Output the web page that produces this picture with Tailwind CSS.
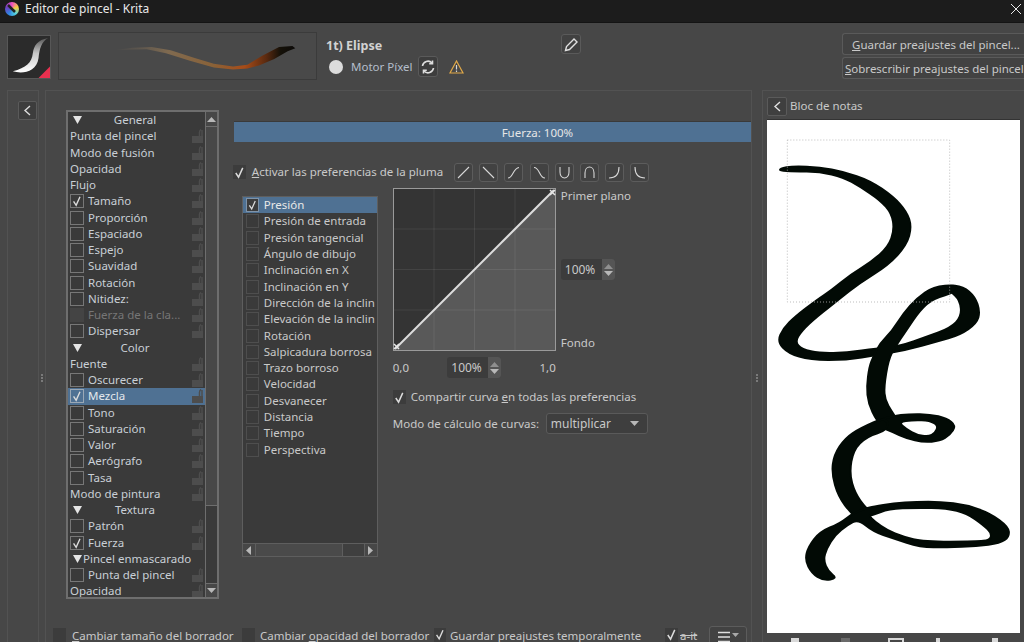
<!DOCTYPE html>
<html lang="es">
<head>
<meta charset="utf-8">
<title>Editor de pincel - Krita</title>
<script src="https://cdn.jsdelivr.net/npm/@tailwindcss/browser@4"></script>
</head>
<body class="m-0">
<svg class="hidden" width="0" height="0">
  <symbol id="lock" viewBox="0 0 11 14"><path d="M0 7h11v7H0z" fill="#4d4d4d"/><path d="M7.5 7V3.5Q7.5 1.5 9 0.5M10 7V1" stroke="#4d4d4d" stroke-width="1.5" fill="none"/></symbol>
  <symbol id="chk" viewBox="0 0 14 14"><path d="M3 7.5L6 12L10.5 2" stroke="#dcdcdc" stroke-width="1.6" fill="none"/></symbol>
  <symbol id="tri" viewBox="0 0 9 8"><path d="M0 0H9L4.5 8Z" fill="#e4e4e4"/></symbol>
</svg>
<div class="w-[1024px] h-[642px] overflow-hidden bg-[#474747] flex flex-col font-['Noto_Sans',sans-serif] text-[11.5px] leading-[16px] text-[#c9c9c9]">

  <!-- title bar -->
  <div class="h-[23px] shrink-0 bg-[#1c1c1c] border-b border-[#141414] flex items-center pl-[5px] pb-[4px] text-[#e8e8e8]">
    <span class="relative w-[14px] h-[14px] rounded-full bg-[conic-gradient(#f050c0,#f8d040,#50d0e0,#3080e0,#7040c0,#f050c0)]">
      <svg class="absolute inset-0" viewBox="0 0 14 14"><path d="M3 3L10 10" stroke="#222" stroke-width="2.5"/></svg>
    </span>
    <span class="ml-[6px] text-[12px]">Editor de pincel - Krita</span>
    <svg class="ml-auto mr-[2px]" width="12" height="12" viewBox="0 0 12 12"><path d="M1 1L11 11M11 1L1 11" stroke="#e8e8e8" stroke-width="1"/></svg>
  </div>

  <!-- header -->
  <div class="h-[67px] shrink-0 flex pl-[7px]">
    <div class="relative mt-[12px] w-[44px] h-[44px] bg-[#2b2b2b] border border-[#575757] overflow-hidden">
      <svg width="42" height="42" viewBox="0 0 44 44">
        <defs><linearGradient id="sg" x1="0" y1="0" x2="0" y2="1"><stop offset="0" stop-color="#555555"/><stop offset="0.45" stop-color="#c8c8c8"/><stop offset="1" stop-color="#ffffff"/></linearGradient></defs>
        <path d="M42 2C31 4 27 10 26 18C25 28 19 33 5 37C15 40 30 38 32 23C33 13 35 6 42 2Z" fill="url(#sg)"/>
        <path d="M32 44L44 44L44 32Z" fill="#e8304f"/>
      </svg>
    </div>
    <div class="mt-[9px] ml-[7px] w-[259px] h-[48px] bg-[#494949] border border-[#3b3b3b]">
      <svg width="257" height="46" viewBox="58 32 259 48">
        <defs><linearGradient id="bg" x1="110" y1="0" x2="300" y2="0" gradientUnits="userSpaceOnUse"><stop offset="0" stop-color="#6a6055" stop-opacity="0"/><stop offset="0.3" stop-color="#7f6a50"/><stop offset="0.55" stop-color="#8a6238"/><stop offset="0.72" stop-color="#a84c18"/><stop offset="0.84" stop-color="#5a2a10"/><stop offset="0.92" stop-color="#141008"/><stop offset="1" stop-color="#0c0a08"/></linearGradient></defs>
        <path d="M110 50L130 47.5L150 46.5L170 50L195 58L215 64L235 67L250 65L265 56L283 46.5L297 45.5L300 48L292 51L278 59L262 66L250 69L235 70L215 68L190 61L165 53L145 49L125 49.5Z" fill="url(#bg)"/>
      </svg>
    </div>
    <div class="ml-[9px] w-[235px] flex flex-col">
      <div class="mt-[15px] font-bold text-[#d2d2d2] text-[12.5px]">1t) Elipse</div>
      <div class="mt-[2px] flex items-center h-[21px]">
        <span class="ml-[3px] w-[14px] h-[14px] rounded-full bg-[#dcdcdc]"></span>
        <span class="ml-[8px] w-[61px] mt-[1px] text-[#b4becb] whitespace-nowrap">Motor Píxel</span>
        <span class="ml-[6px] w-[20px] h-[21px] rounded-[3px] bg-[#3d3d3d] border border-[#5a5a5a] flex items-center justify-center">
          <svg width="16" height="16" viewBox="0 0 16 16" fill="none" stroke="#dddddd" stroke-width="1.6"><path d="M2.5 7A5.5 5.5 0 0 1 12 4M13.5 9A5.5 5.5 0 0 1 4 12"/><path d="M12.5 1.5V4.8H9.2M3.5 14.5V11.2H6.8"/></svg>
        </span>
        <svg class="ml-[11px]" width="15" height="14" viewBox="0 0 15 14" fill="none"><path d="M7.5 1L14 13H1Z" stroke="#e0a848" stroke-width="1.2"/><path d="M7.5 5V9.5M7.5 10.5V12" stroke="#d8d8d8" stroke-width="1.2"/></svg>
      </div>
    </div>
    <div class="mt-[11px] w-[20px] h-[20px] rounded-[3px] border border-[#5a5a5a] bg-[#414141] flex items-center justify-center">
      <svg width="15" height="15" viewBox="0 0 15 15" fill="none" stroke="#e0e0e0" stroke-width="1.4"><path d="M1.5 13.5L2.5 9.5L10 2L13 5L5.5 12.5Z"/></svg>
    </div>
    <div class="ml-auto flex flex-col gap-[2px] mt-[10px] w-[182px]">
      <div class="h-[22px] rounded-l-[3px] border border-r-0 border-[#5a5a5a] bg-[#424242] pl-[9px] leading-[22px] whitespace-nowrap"><span class="underline">G</span>uardar preajustes del pincel...</div>
      <div class="h-[22px] rounded-l-[3px] border border-r-0 border-[#5a5a5a] bg-[#424242] pl-[2px] leading-[22px] whitespace-nowrap"><span class="underline">S</span>obrescribir preajustes del pincel</div>
    </div>
  </div>

  <!-- main -->
  <div class="flex-1 min-h-0 flex pl-[7px]">
    <div class="w-[32px] border border-b-0 border-[#525252] pl-[10px] pt-[10px]">
      <div class="w-[19px] h-[19px] rounded-[2px] border border-[#5a5a5a] bg-[#3d3d3d] flex items-center justify-center">
        <svg width="9" height="11" viewBox="0 0 9 11" fill="none" stroke="#dddddd" stroke-width="1.4"><path d="M7 1L2 5.5L7 10"/></svg>
      </div>
    </div>
    <div class="w-[6px] flex flex-col items-center justify-center gap-[1px] pt-[24px]"><span class="w-[2px] h-[2px] bg-[#7a7a7a]"></span><span class="w-[2px] h-[2px] bg-[#7a7a7a]"></span><span class="w-[2px] h-[2px] bg-[#7a7a7a]"></span></div>

    <!-- centre panel -->
    <div class="w-[707px] border border-b-0 border-[#525252] flex flex-col">
      <div class="h-[535px] flex shrink-0">
        <!-- option list -->
        <div class="mt-[19px] ml-[20px] w-[153px] h-[489px] border-2 border-[#6e6e6e] bg-[#3a3a3a] flex overflow-hidden">
          <div class="w-[137px] overflow-hidden whitespace-nowrap text-[#c9cfd6]">
            <div class="h-[16.25px] flex items-center pl-[5px]"><svg width="9" height="8"><use href="#tri"/></svg><span class="flex-1 text-center pr-[17px]">General</span></div>
            <div class="h-[16.25px] flex items-center pl-[2px]"><span>Punta del pincel</span><svg class="ml-auto mr-[2px]" width="11" height="14"><use href="#lock"/></svg></div>
            <div class="h-[16.25px] flex items-center pl-[2px]"><span>Modo de fusión</span><svg class="ml-auto mr-[2px]" width="11" height="14"><use href="#lock"/></svg></div>
            <div class="h-[16.25px] flex items-center pl-[2px]"><span>Opacidad</span><svg class="ml-auto mr-[2px]" width="11" height="14"><use href="#lock"/></svg></div>
            <div class="h-[16.25px] flex items-center pl-[2px]"><span>Flujo</span><svg class="ml-auto mr-[2px]" width="11" height="14"><use href="#lock"/></svg></div>
            <div class="h-[16.25px] flex items-center pl-[2px]"><span class="w-[14px] h-[14px] border border-[#777] mr-[4px]"><svg width="12" height="12"><use href="#chk"/></svg></span><span>Tamaño</span><svg class="ml-auto mr-[2px]" width="11" height="14"><use href="#lock"/></svg></div>
            <div class="h-[16.25px] flex items-center pl-[2px]"><span class="w-[14px] h-[14px] border border-[#777] mr-[4px]"></span><span>Proporción</span><svg class="ml-auto mr-[2px]" width="11" height="14"><use href="#lock"/></svg></div>
            <div class="h-[16.25px] flex items-center pl-[2px]"><span class="w-[14px] h-[14px] border border-[#777] mr-[4px]"></span><span>Espaciado</span><svg class="ml-auto mr-[2px]" width="11" height="14"><use href="#lock"/></svg></div>
            <div class="h-[16.25px] flex items-center pl-[2px]"><span class="w-[14px] h-[14px] border border-[#777] mr-[4px]"></span><span>Espejo</span><svg class="ml-auto mr-[2px]" width="11" height="14"><use href="#lock"/></svg></div>
            <div class="h-[16.25px] flex items-center pl-[2px]"><span class="w-[14px] h-[14px] border border-[#777] mr-[4px]"></span><span>Suavidad</span><svg class="ml-auto mr-[2px]" width="11" height="14"><use href="#lock"/></svg></div>
            <div class="h-[16.25px] flex items-center pl-[2px]"><span class="w-[14px] h-[14px] border border-[#777] mr-[4px]"></span><span>Rotación</span><svg class="ml-auto mr-[2px]" width="11" height="14"><use href="#lock"/></svg></div>
            <div class="h-[16.25px] flex items-center pl-[2px]"><span class="w-[14px] h-[14px] border border-[#777] mr-[4px]"></span><span>Nitidez:</span><svg class="ml-auto mr-[2px]" width="11" height="14"><use href="#lock"/></svg></div>
            <div class="h-[16.25px] flex items-center pl-[2px]"><span class="w-[14px] h-[14px] bg-[#444] mr-[4px]"></span><span class="text-[#767676]">Fuerza de la cla...</span><svg class="ml-auto mr-[2px]" width="11" height="14"><use href="#lock"/></svg></div>
            <div class="h-[16.25px] flex items-center pl-[2px]"><span class="w-[14px] h-[14px] border border-[#777] mr-[4px]"></span><span>Dispersar</span><svg class="ml-auto mr-[2px]" width="11" height="14"><use href="#lock"/></svg></div>
            <div class="h-[16.25px] flex items-center pl-[5px]"><svg width="9" height="8"><use href="#tri"/></svg><span class="flex-1 text-center pr-[17px]">Color</span></div>
            <div class="h-[16.25px] flex items-center pl-[2px]"><span>Fuente</span><svg class="ml-auto mr-[2px]" width="11" height="14"><use href="#lock"/></svg></div>
            <div class="h-[16.25px] flex items-center pl-[2px]"><span class="w-[14px] h-[14px] border border-[#777] mr-[4px]"></span><span>Oscurecer</span><svg class="ml-auto mr-[2px]" width="11" height="14"><use href="#lock"/></svg></div>
            <div class="h-[16.25px] flex items-center pl-[2px] bg-[#4f7193] text-[#e4e8ec]"><span class="w-[14px] h-[14px] border border-[#9aa8b6] mr-[4px]"><svg width="12" height="12"><use href="#chk"/></svg></span><span>Mezcla</span><svg class="ml-auto mr-[2px]" width="11" height="14"><use href="#lock"/></svg></div>
            <div class="h-[16.25px] flex items-center pl-[2px]"><span class="w-[14px] h-[14px] border border-[#777] mr-[4px]"></span><span>Tono</span><svg class="ml-auto mr-[2px]" width="11" height="14"><use href="#lock"/></svg></div>
            <div class="h-[16.25px] flex items-center pl-[2px]"><span class="w-[14px] h-[14px] border border-[#777] mr-[4px]"></span><span>Saturación</span><svg class="ml-auto mr-[2px]" width="11" height="14"><use href="#lock"/></svg></div>
            <div class="h-[16.25px] flex items-center pl-[2px]"><span class="w-[14px] h-[14px] border border-[#777] mr-[4px]"></span><span>Valor</span><svg class="ml-auto mr-[2px]" width="11" height="14"><use href="#lock"/></svg></div>
            <div class="h-[16.25px] flex items-center pl-[2px]"><span class="w-[14px] h-[14px] border border-[#777] mr-[4px]"></span><span>Aerógrafo</span><svg class="ml-auto mr-[2px]" width="11" height="14"><use href="#lock"/></svg></div>
            <div class="h-[16.25px] flex items-center pl-[2px]"><span class="w-[14px] h-[14px] border border-[#777] mr-[4px]"></span><span>Tasa</span><svg class="ml-auto mr-[2px]" width="11" height="14"><use href="#lock"/></svg></div>
            <div class="h-[16.25px] flex items-center pl-[2px]"><span>Modo de pintura</span><svg class="ml-auto mr-[2px]" width="11" height="14"><use href="#lock"/></svg></div>
            <div class="h-[16.25px] flex items-center pl-[5px]"><svg width="9" height="8"><use href="#tri"/></svg><span class="flex-1 text-center pr-[17px]">Textura</span></div>
            <div class="h-[16.25px] flex items-center pl-[2px]"><span class="w-[14px] h-[14px] border border-[#777] mr-[4px]"></span><span>Patrón</span><svg class="ml-auto mr-[2px]" width="11" height="14"><use href="#lock"/></svg></div>
            <div class="h-[16.25px] flex items-center pl-[2px]"><span class="w-[14px] h-[14px] border border-[#777] mr-[4px]"><svg width="12" height="12"><use href="#chk"/></svg></span><span>Fuerza</span><svg class="ml-auto mr-[2px]" width="11" height="14"><use href="#lock"/></svg></div>
            <div class="h-[16.25px] flex items-center pl-[5px]"><svg class="mr-[1px]" width="9" height="8"><use href="#tri"/></svg><span>Pincel enmascarado</span></div>
            <div class="h-[16.25px] flex items-center pl-[2px]"><span class="w-[14px] h-[14px] border border-[#777] mr-[4px]"></span><span>Punta del pincel</span><svg class="ml-auto mr-[2px]" width="11" height="14"><use href="#lock"/></svg></div>
            <div class="h-[16.25px] flex items-center pl-[2px]"><span>Opacidad</span><svg class="ml-auto mr-[2px]" width="11" height="14"><use href="#lock"/></svg></div>
          </div>
          <div class="flex-1 border-l border-[#6e6e6e] bg-[#474747] flex flex-col">
            <div class="h-[15px] border-b border-[#6e6e6e] flex items-center justify-center"><svg width="9" height="5"><path d="M0 5L4.5 0L9 5Z" fill="#b8b8b8"/></svg></div>
            <div class="h-[379px] border-b border-[#6e6e6e] bg-[#484848]"></div>
            <div class="flex-1 bg-[#3a3a3a]"></div>
            <div class="h-[14px] border-t border-[#6e6e6e] flex items-center justify-center"><svg width="9" height="5"><path d="M0 0L4.5 5L9 0Z" fill="#b8b8b8"/></svg></div>
          </div>
        </div>

        <!-- settings -->
        <div class="ml-[15px] w-[518px] flex flex-col pt-[30px]">
          <div class="h-[21px] bg-[#4f7193] border-t border-[#3a3a3a] pl-[90px] text-center text-[#e6e6e6] leading-[21px]">Fuerza: 100%</div>
          <div class="mt-[20px] h-[20px] flex items-center -ml-[1px]">
            <span class="w-[13px] h-[14px] bg-[#3c3c3c] flex items-center justify-center"><svg width="13" height="13"><use href="#chk"/></svg></span>
            <span class="ml-[6px] w-[202px] whitespace-nowrap"><span class="underline">A</span>ctivar las preferencias de la pluma</span>
            <div class="flex">
              <span class="w-[19px] h-[19px] mr-[6px] rounded-[3px] border border-[#5c5c5c] bg-[#424242] flex items-center justify-center"><svg width="15" height="15" viewBox="0 0 15 15" fill="none" stroke="#d8d8d8" stroke-width="1.1"><path d="M2 13L13 2"/></svg></span>
              <span class="w-[19px] h-[19px] mr-[6px] rounded-[3px] border border-[#5c5c5c] bg-[#424242] flex items-center justify-center"><svg width="15" height="15" viewBox="0 0 15 15" fill="none" stroke="#d8d8d8" stroke-width="1.1"><path d="M2 2L13 13"/></svg></span>
              <span class="w-[19px] h-[19px] mr-[7px] rounded-[3px] border border-[#5c5c5c] bg-[#424242] flex items-center justify-center"><svg width="15" height="15" viewBox="0 0 15 15" fill="none" stroke="#d8d8d8" stroke-width="1.1"><path d="M2 13C7 13 7 3 13 2.5"/></svg></span>
              <span class="w-[19px] h-[19px] mr-[6px] rounded-[3px] border border-[#5c5c5c] bg-[#424242] flex items-center justify-center"><svg width="15" height="15" viewBox="0 0 15 15" fill="none" stroke="#d8d8d8" stroke-width="1.1"><path d="M2 2.5C8 2.5 7 13 13 13"/></svg></span>
              <span class="w-[19px] h-[19px] mr-[6px] rounded-[3px] border border-[#5c5c5c] bg-[#424242] flex items-center justify-center"><svg width="15" height="15" viewBox="0 0 15 15" fill="none" stroke="#d8d8d8" stroke-width="1.1"><path d="M3 2V7C3 15 12 15 12 7V2"/></svg></span>
              <span class="w-[19px] h-[19px] mr-[6px] rounded-[3px] border border-[#5c5c5c] bg-[#424242] flex items-center justify-center"><svg width="15" height="15" viewBox="0 0 15 15" fill="none" stroke="#d8d8d8" stroke-width="1.1"><path d="M3 13V8C3 0 12 0 12 8V13"/></svg></span>
              <span class="w-[19px] h-[19px] mr-[6px] rounded-[3px] border border-[#5c5c5c] bg-[#424242] flex items-center justify-center"><svg width="15" height="15" viewBox="0 0 15 15" fill="none" stroke="#d8d8d8" stroke-width="1.1"><path d="M2 13C9 13 12 9 12 2"/></svg></span>
              <span class="w-[19px] h-[19px] rounded-[3px] border border-[#5c5c5c] bg-[#424242] flex items-center justify-center"><svg width="15" height="15" viewBox="0 0 15 15" fill="none" stroke="#d8d8d8" stroke-width="1.1"><path d="M3 2C3 9 6 13 13 13"/></svg></span>
            </div>
          </div>
          <div class="mt-[6px] flex">
            <!-- sensors -->
            <div class="ml-[8px] mt-[8px] w-[136px] h-[361px] border border-[#5e5e5e] bg-[#3a3a3a] flex flex-col overflow-hidden whitespace-nowrap">
              <div class="flex-1 overflow-hidden">
                <div class="h-[16.3px] flex items-center pl-[3px] bg-[#4f7193] text-[#e8e8e8]"><span class="w-[13px] h-[14px] border border-[#7f93a8] bg-[#3c3c3c] mr-[5px] shrink-0"><svg width="11" height="12"><use href="#chk"/></svg></span>Presión</div>
                <div class="h-[16.3px] flex items-center pl-[3px]"><span class="w-[13px] h-[14px] border border-[#4e4e4e] mr-[5px] shrink-0"></span>Presión de entrada</div>
                <div class="h-[16.3px] flex items-center pl-[3px]"><span class="w-[13px] h-[14px] border border-[#4e4e4e] mr-[5px] shrink-0"></span>Presión tangencial</div>
                <div class="h-[16.3px] flex items-center pl-[3px]"><span class="w-[13px] h-[14px] border border-[#4e4e4e] mr-[5px] shrink-0"></span>Ángulo de dibujo</div>
                <div class="h-[16.3px] flex items-center pl-[3px]"><span class="w-[13px] h-[14px] border border-[#4e4e4e] mr-[5px] shrink-0"></span>Inclinación en X</div>
                <div class="h-[16.3px] flex items-center pl-[3px]"><span class="w-[13px] h-[14px] border border-[#4e4e4e] mr-[5px] shrink-0"></span>Inclinación en Y</div>
                <div class="h-[16.3px] flex items-center pl-[3px]"><span class="w-[13px] h-[14px] border border-[#4e4e4e] mr-[5px] shrink-0"></span>Dirección de la inclin</div>
                <div class="h-[16.3px] flex items-center pl-[3px]"><span class="w-[13px] h-[14px] border border-[#4e4e4e] mr-[5px] shrink-0"></span>Elevación de la inclin</div>
                <div class="h-[16.3px] flex items-center pl-[3px]"><span class="w-[13px] h-[14px] border border-[#4e4e4e] mr-[5px] shrink-0"></span>Rotación</div>
                <div class="h-[16.3px] flex items-center pl-[3px]"><span class="w-[13px] h-[14px] border border-[#4e4e4e] mr-[5px] shrink-0"></span>Salpicadura borrosa</div>
                <div class="h-[16.3px] flex items-center pl-[3px]"><span class="w-[13px] h-[14px] border border-[#4e4e4e] mr-[5px] shrink-0"></span>Trazo borroso</div>
                <div class="h-[16.3px] flex items-center pl-[3px]"><span class="w-[13px] h-[14px] border border-[#4e4e4e] mr-[5px] shrink-0"></span>Velocidad</div>
                <div class="h-[16.3px] flex items-center pl-[3px]"><span class="w-[13px] h-[14px] border border-[#4e4e4e] mr-[5px] shrink-0"></span>Desvanecer</div>
                <div class="h-[16.3px] flex items-center pl-[3px]"><span class="w-[13px] h-[14px] border border-[#4e4e4e] mr-[5px] shrink-0"></span>Distancia</div>
                <div class="h-[16.3px] flex items-center pl-[3px]"><span class="w-[13px] h-[14px] border border-[#4e4e4e] mr-[5px] shrink-0"></span>Tiempo</div>
                <div class="h-[16.3px] flex items-center pl-[3px]"><span class="w-[13px] h-[14px] border border-[#4e4e4e] mr-[5px] shrink-0"></span>Perspectiva</div>
              </div>
              <div class="h-[13px] shrink-0 border-t border-[#5e5e5e] bg-[#474747] flex">
                <span class="w-[13px] border-r border-[#5e5e5e] flex items-center justify-center"><svg width="5" height="9"><path d="M5 0L0 4.5L5 9Z" fill="#b8b8b8"/></svg></span>
                <span class="w-[87px] border-r border-[#5e5e5e] bg-[#4a4a4a]"></span>
                <span class="flex-1 bg-[#3f3f3f]"></span>
                <span class="w-[13px] border-l border-[#5e5e5e] flex items-center justify-center"><svg width="5" height="9"><path d="M0 0L5 4.5L0 9Z" fill="#b8b8b8"/></svg></span>
              </div>
            </div>
            <!-- curve -->
            <div class="ml-[15px] w-[255px] flex flex-col">
              <div class="flex h-[163px]">
                <svg width="163" height="163" viewBox="0 0 163 163">
                  <rect x="0.5" y="0.5" width="162" height="162" fill="#343434"/>
                  <path d="M1 162L162 1V162Z" fill="#595959"/>
                  <path d="M41 1V162M81.5 1V162M122 1V162M1 41H162M1 81.5H162M1 122H162" stroke="#ffffff" stroke-opacity="0.08" stroke-width="1"/>
                  <rect x="0.5" y="0.5" width="162" height="162" fill="none" stroke="#9a9a9a"/>
                  <path d="M2 161L161 2" stroke="#dcdcdc" stroke-width="2"/>
                  <path d="M157 2L162 7M162 2L157 7M1 156L6 161M6 156L1 161" stroke="#e6e6e6" stroke-width="1.5"/>
                </svg>
                <div class="ml-[5px] flex flex-col justify-between">
                  <span>Primer plano</span>
                  <div class="w-[54px] h-[21px] rounded-[3px] bg-[#3c3c3c] flex items-center pl-[4px] text-[12px]">100%<span class="ml-auto w-[13px] h-[21px] bg-[#555] rounded-r-[3px] flex flex-col items-center justify-center gap-[2px]"><svg width="9" height="5"><path d="M0 5L4.5 0L9 5Z" fill="#8f8f8f"/></svg><svg width="9" height="5"><path d="M0 0L4.5 5L9 0Z" fill="#b8b8b8"/></svg></span></div>
                  <span>Fondo</span>
                </div>
              </div>
              <div class="mt-[6px] w-[163px] h-[21px] flex items-center justify-between">
                <span>0,0</span>
                <div class="w-[54px] h-[21px] rounded-[3px] bg-[#3c3c3c] flex items-center pl-[4px] text-[12px]">100%<span class="ml-auto w-[13px] h-[21px] bg-[#555] rounded-r-[3px] flex flex-col items-center justify-center gap-[2px]"><svg width="9" height="5"><path d="M0 5L4.5 0L9 5Z" fill="#8f8f8f"/></svg><svg width="9" height="5"><path d="M0 0L4.5 5L9 0Z" fill="#b8b8b8"/></svg></span></div>
                <span>1,0</span>
              </div>
              <div class="mt-[12px] h-[14px] flex items-center whitespace-nowrap">
                <span class="w-[13px] h-[14px] bg-[#3c3c3c] flex items-center justify-center"><svg width="13" height="13"><use href="#chk"/></svg></span>
                <span class="ml-[5px]">Compartir curva <span class="underline">e</span>n todas las preferencias</span>
              </div>
              <div class="mt-[9px] h-[21px] flex items-center whitespace-nowrap">
                <span class="w-[153px]">Modo de cálculo de curvas:</span>
                <div class="w-[102px] h-[21px] rounded-[3px] border border-[#5a5a5a] bg-[#3e3e3e] flex items-center pl-[4px] text-[12px]">multiplicar<svg class="ml-auto mr-[8px]" width="9" height="5"><path d="M0 0L4.5 5L9 0Z" fill="#b8b8b8"/></svg></div>
              </div>
            </div>
          </div>
        </div>
      </div>
      <!-- bottom row -->
      <div class="flex-1 flex items-start pt-[2px] whitespace-nowrap">
        <span class="ml-[7px] w-[13px] h-[14px] bg-[#3c3c3c]"></span>
        <span class="ml-[6px] w-[170px]"><span class="underline">C</span>ambiar tamaño del borrador</span>
        <span class="w-[13px] h-[14px] bg-[#3c3c3c]"></span>
        <span class="ml-[5px] w-[174px]">Cambiar <span class="underline">o</span>pacidad del borrador</span>
        <span class="w-[12px] h-[14px] bg-[#3c3c3c]"><svg width="12" height="13"><use href="#chk"/></svg></span>
        <span class="ml-[4px] w-[215px]">Guardar preajustes temporalmente</span>
        <span class="w-[13px] h-[14px] bg-[#3c3c3c]"><svg width="13" height="13"><use href="#chk"/></svg></span>
        <span class="ml-[2px] w-[29px] line-through">a-it</span>
        <span class="w-[38px] h-[20px] -mt-[2px] rounded-t-[3px] border border-[#5c5c5c] bg-[#424242] flex items-start justify-center pt-[4px] gap-[2px]"><svg width="12" height="12" viewBox="0 0 12 12"><path d="M0 1.5H12M0 6H12M0 10.5H12" stroke="#e0e0e0" stroke-width="1.6"/></svg><svg class="mt-[2px]" width="7" height="4"><path d="M0 0L3.5 4L7 0Z" fill="#a8a8a8"/></svg></span>
      </div>
    </div>
    <div class="w-[10px] flex flex-col items-center justify-center gap-[1px] pt-[24px]"><span class="w-[2px] h-[2px] bg-[#7a7a7a]"></span><span class="w-[2px] h-[2px] bg-[#7a7a7a]"></span><span class="w-[2px] h-[2px] bg-[#7a7a7a]"></span></div>

    <!-- scratchpad -->
    <div class="w-[262px] border-l border-t border-[#525252] pl-[4px] flex flex-col">
      <div class="mt-[6px] h-[22px] flex items-start shrink-0">
        <span class="w-[20px] h-[19px] rounded-[2px] border border-[#5a5a5a] bg-[#3f3f3f] flex items-center justify-center"><svg width="9" height="11" viewBox="0 0 9 11" fill="none" stroke="#e0e0e0" stroke-width="1.4"><path d="M7 1L2 5.5L7 10"/></svg></span>
        <span class="ml-[3px] pt-[1px]">Bloc de notas</span>
      </div>
      <div class="w-[253px] h-[514px] shrink-0 bg-white border-t border-[#333]">
        <svg width="253" height="513" viewBox="21 90 759 1539" fill="#020a05" stroke="#020a05" stroke-width="6" stroke-linejoin="round">
          <path data-p="60,236 100,228 180,232 250,245 330,272 400,320 440,365 455,410 440,465 385,525 300,578 235,630 170,680 125,722 105,755 125,778 180,790 260,788 350,775 420,768 500,740 570,715 605,680 600,630 570,603 560,585 610,590 645,620 660,665 650,700 600,735 530,755 440,780 350,795 260,810 150,810 85,790 52,755 70,715 105,680 170,630 215,600 270,555 335,515 385,470 403,420 395,370 360,330 300,290 250,262 180,245 100,244 60,242"/>
          <path data-p="590,584 520,590 470,625 430,670 395,725 360,760 340,800 328,830 320,890 325,940 350,992 375,1012 410,985 395,965 375,930 372,890 385,810 405,770 440,720 480,660 520,625 590,606"/>
          <g transform="translate(0 810)">
            <path fill-rule="evenodd" data-p="350,183 395,168 450,162 510,163 560,175 588,197 570,225 540,243 490,247 440,235 395,215 365,203|415,186 460,180 510,182 535,197 525,220 505,230 470,225 440,208"/>
            <path data-p="380,170 300,205 255,235 222,285 215,340 235,410 275,462 310,490 340,460 318,445 285,400 268,340 280,270 320,230 385,210"/>
            <path fill-rule="evenodd" data-p="275,462 240,490 180,515 145,560 135,600 155,640 190,662 232,655 205,635 190,600 200,565 225,525 262,495 295,478 340,515 400,535 480,562 560,562 650,558 720,550 748,530 745,500 690,460 620,435 540,425 470,425 400,430 340,440 318,445|340,465 385,447 470,443 560,445 620,460 670,495 695,520 690,540 650,545 490,545 430,530 380,510 345,485 325,465"/>
          </g>
          <rect x="82" y="150" width="487" height="486" fill="none" stroke="#b0b0b0" stroke-width="2.5" stroke-dasharray="3 6"/>
        </svg>
      </div>
      <div class="mt-[5px] flex w-[253px] h-[4px] overflow-hidden">
        <span class="ml-[24px] w-[8px] h-[4px] bg-[#d8d8d8]"></span>
        <span class="ml-[42px] w-[9px] h-[4px] bg-[#6a6a6a]"></span>
        <span class="ml-[38px] w-[16px] h-[4px] border-2 border-b-0 border-[#d8d8d8]"></span>
        <span class="ml-[32px] w-[4px] h-[4px] bg-[#d8d8d8]"></span>
        <span class="ml-[52px] w-[6px] h-[4px] bg-[#d8d8d8]"></span>
      </div>
    </div>
  </div>
</div>
<script>
document.querySelectorAll('path[data-p]').forEach(function (el) {
  var d = '';
  el.getAttribute('data-p').split('|').forEach(function (loop) {
    var p = loop.trim().split(' ').map(function (s) { return s.split(',').map(Number); });
    var n = p.length;
    function mid(a, b) { return ((a[0] + b[0]) / 2) + ' ' + ((a[1] + b[1]) / 2); }
    d += 'M' + mid(p[n - 1], p[0]);
    for (var i = 0; i < n; i++) { d += 'Q' + p[i][0] + ' ' + p[i][1] + ' ' + mid(p[i], p[(i + 1) % n]); }
    d += 'Z';
  });
  el.setAttribute('d', d);
});
</script>
</body>
</html>
